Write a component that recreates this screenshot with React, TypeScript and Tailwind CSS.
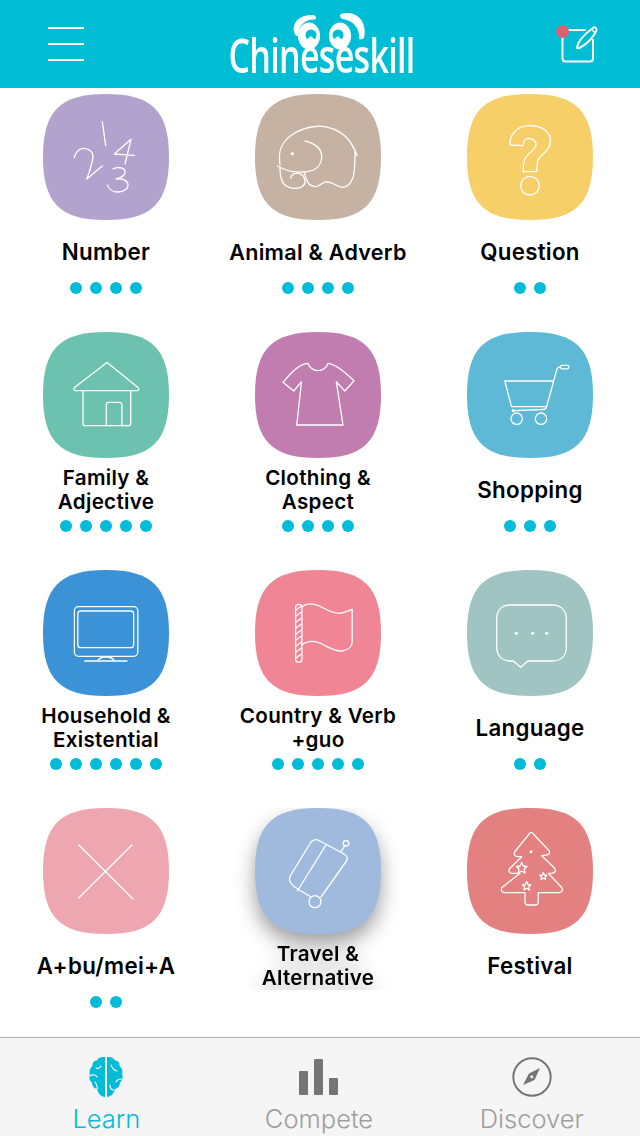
import type { ReactNode } from 'react';

const TILE = 'M63 0C109 0 126 17 126 63C126 109 109 126 63 126C17 126 0 109 0 63C0 17 17 0 63 0Z';

const icons: Record<string, ReactNode> = {
  number: (
    <>
      <path d="M59.3 27.7L62.7 51.7" />
      <path d="M31.3 63.7C33 56 39 53 44 55C50 57 51 62 49 68C48 73 46 80 43.7 85L59.3 72" />
      <path d="M88 45.3L71.3 60L91.3 61.3M88 45.3L82 70" />
      <path d="M70 75C74 73 81 73 82 77C83 81 78 84 73 85C80 84 85 87 85 91C85 96 79 98 74 98C70 98 66 95 64.3 91" />
    </>
  ),
  animal: (
    <>
      <path d="M25 71C24 62 24 56 28 50C33 42 45 34 60 32.5C72 31 85 36 93 45C97 50 100 56 102.3 61.7L100 58C100 68 100 76 98.3 82.7C96 89 93 93 88 93.3C84 93.5 81 91 78 89.5C74 87.5 71 87.5 68 89C65 91 62 93 60 92.7C56 92 53 90 51.7 86C50.5 83 50 80 49 77.7" />
      <path d="M22.3 72C27 74.5 33 77 38.3 77.7C45 78.5 53 78 58.3 76C63 74 66.7 69 66.7 62.7C66.7 56 62 50 50 47" />
      <path d="M25 74.3C25 80 26 85.5 28.3 89.3C31 93 37 95 41.7 94.3C47 93.5 50.5 91 50 87C49.5 83 47.5 80 43.5 79.3C40 78.8 36 80.5 35.7 84.3" />
      <circle cx="37.3" cy="59.7" r="1.6" fill="white" stroke="none" />
    </>
  ),
  question: (
    <>
      <path d="M43 51C42.5 44 46 37 53 33.5C60 30.5 71 31 78 36C84 41 85 48 81.3 54.3C78 59 73 62 71 66C70 69 69.7 74 69.7 77.7H56.3C56 71 56.5 67 59 63C61.5 59.5 66.5 56.5 68.5 53C70.5 49 67 44 61.3 44.3C57.5 44.5 56.3 48 56.3 51.7Z" />
      <circle cx="63" cy="91.7" r="9.3" />
    </>
  ),
  house: (
    <>
      <path d="M63 31.3C63.5 30.5 64.5 30.5 65 31.3L95 55.5C96.5 57 96 58.7 94 58.7H32.5C30.5 58.7 30 57 31.5 55.5Z" />
      <path d="M40 58.7V91.5C40 93 41 93.7 42 93.7H85.7C87 93.7 87.7 93 87.7 91.5V58.7" />
      <path d="M63.3 93.7V73C63.3 71 64.5 70.3 66 70.3H76C78 70.3 78.9 71 78.9 73V93.7" />
    </>
  ),
  shirt: (
    <path d="M52.8 31.3C55 36.5 58.5 38.7 63 38.7C67.5 38.7 71 36.5 73.1 31.3C80 32 90 40 99 48.7L89.8 59L81.3 49.7L88 93H41.7L46.5 49.7L38.7 59L28 50.3C36 41 44 32 52.8 31.3Z" />
  ),
  cart: (
    <>
      <rect x="93.4" y="33.3" width="8.5" height="3.6" rx="1.8" />
      <path d="M93.4 34.9C91 35 90 36 89.7 38L79.5 75C79 77 78 77.5 76 77.5L46.3 78.7" />
      <path d="M37.8 49H86M37.8 49L44.5 74.7H79" />
      <circle cx="49.7" cy="86.7" r="5.7" />
      <circle cx="74" cy="86.7" r="5.7" />
      <circle cx="46.3" cy="78.7" r="1" fill="white" />
    </>
  ),
  tv: (
    <>
      <rect x="31.4" y="36.7" width="63.4" height="49.6" rx="4" />
      <rect x="34.8" y="41" width="55.9" height="36.7" rx="3" />
      <path d="M41.8 91H84M54.4 91C56 88 59 87 63 87C67 87 70 88 71.4 91" />
    </>
  ),
  flag: (
    <>
      <rect x="40.6" y="34.3" width="6.3" height="58" rx="3" />
      {[40, 46, 52, 58, 64, 70, 76, 82, 88].map((y) => (
        <path key={y} d={`M41 ${y}L46.5 ${y - 4}`} strokeWidth="1.2" />
      ))}
      <path d="M46.9 36.7C52 33 57 33 63 35.5C71 39 77 43.5 84 43.3C89 43 93 41 97.2 39.3V72C97.2 76 94 80 87 81C80 81.5 73 77 66 73.5C59 70.5 52 71 46.9 75" />
    </>
  ),
  bubble: (
    <>
      <path d="M44 35H85C94 35 99.3 40 99.3 49V77C99.3 86 94 91 85 91H61L53.7 97.3L46.3 91H44C35 91 29.7 86 29.7 77V49C29.7 40 35 35 44 35Z" />
      <circle cx="49.3" cy="63.3" r="1.6" fill="white" stroke="none" />
      <circle cx="65.6" cy="63.3" r="1.6" fill="white" stroke="none" />
      <circle cx="79.7" cy="63.3" r="1.6" fill="white" stroke="none" />
    </>
  ),
  cross: <path d="M35.9 37L90 91M88.9 37L35.9 89.7" />,
  case: (
    <>
      <path d="M66 89L91.5 53C93 50 92 47.5 89 46L64 32.5C61 31 58 31.5 56 34L35.5 67.5C33 72 36 77 42 80.5L55 88.5" />
      <path d="M71.3 36.3L42.4 83" />
      <circle cx="60" cy="93.7" r="6" />
      <path d="M86.1 43.7L89.8 37.5" />
      <circle cx="91" cy="35.3" r="2.8" />
    </>
  ),
  tree: (
    <>
      <path d="M62.5 25.5C63.5 24 64.8 24 65.8 25.5L82 42.5C83.5 45 82 47 79 47.2L74.7 47.7L87.5 60C89.5 63 88 65 85 65.2L81.3 65.3L94.7 79.5C96.5 82.5 94.5 84.7 91.3 84.7H71.3V94C71.3 96 70 97 68 97H61C59 97 58 96 58 94V84.7H38C35 84.7 33.5 82.5 35 79.5L53 65.3H45C42 65.3 41 62.5 43 60.3L54.7 48.7H50.5C47.5 48.5 46.5 46 48 43.5Z" />
      <path d="M54.7 54.5L56.3 58L60 58.5L57.3 61L58 65L54.7 63L51.3 65L52 61L49.5 58.5L53 58Z" />
      <path d="M76.3 64.5L77.3 67L79.8 67.2L78 69L78.6 71.5L76.3 70.2L74 71.5L74.6 69L72.8 67.2L75.3 67Z" />
      <path d="M59.7 73.5L61 76.5L64 76.8L61.8 78.8L62.4 82L59.7 80.3L57 82L57.6 78.8L55.4 76.8L58.4 76.5Z" />
      <circle cx="64" cy="43.7" r="1.5" fill="white" stroke="none" />
    </>
  ),
};

type Unit = { title: string; fill: string; icon: string; dots: number; dragged?: boolean };

const units: Unit[] = [
  { title: 'Number', fill: '#b2a2ce', icon: 'number', dots: 4 },
  { title: 'Animal & Adverb', fill: '#c6b2a2', icon: 'animal', dots: 4 },
  { title: 'Question', fill: '#f6cf69', icon: 'question', dots: 2 },
  { title: 'Family &\nAdjective', fill: '#6cc2ae', icon: 'house', dots: 5 },
  { title: 'Clothing &\nAspect', fill: '#c17db0', icon: 'shirt', dots: 4 },
  { title: 'Shopping', fill: '#5db9d6', icon: 'cart', dots: 3 },
  { title: 'Household &\nExistential', fill: '#3b92d6', icon: 'tv', dots: 6 },
  { title: 'Country & Verb\n+guo', fill: '#f08595', icon: 'flag', dots: 5 },
  { title: 'Language', fill: '#a0c4c2', icon: 'bubble', dots: 2 },
  { title: 'A+bu/mei+A', fill: '#eea6b0', icon: 'cross', dots: 2 },
  { title: 'Travel &\nAlternative', fill: '#a0bade', icon: 'case', dots: 0, dragged: true },
  { title: 'Festival', fill: '#e38080', icon: 'tree', dots: 0 },
];

function labelSize(title: string) {
  if (title.includes('\n')) return 'text-[20.6px]';
  if (title === 'Animal & Adverb') return 'text-[21.5px]';
  return 'text-[22.3px]';
}

function Tile({ unit }: { unit: Unit }) {
  return (
    <svg width="126" height="126" viewBox="0 0 126 126" fill="none" className="shrink-0">
      <path d={TILE} fill={unit.fill} />
      <g stroke="white" strokeWidth="1.3" strokeLinecap="round" strokeLinejoin="round">
        {icons[unit.icon]}
      </g>
    </svg>
  );
}

function UnitCell({ unit }: { unit: Unit }) {
  const body = (
    <>
      <Tile unit={unit} />
      <div className={`mt-2 flex h-12 items-center justify-center whitespace-pre-line text-center leading-6 font-semibold tracking-[0.3px] text-black ${labelSize(unit.title)}`}>
        {unit.title}
      </div>
    </>
  );

  if (unit.dragged) {
    return (
      <div className="h-[182px] overflow-hidden">
        <div className="flex flex-col items-center [filter:drop-shadow(0_10px_10px_rgba(0,0,0,0.38))]">{body}</div>
      </div>
    );
  }

  return (
    <div className="flex flex-col items-center">
      {body}
      <div className="mt-1.5 flex h-3 gap-2">
        {Array.from({ length: unit.dots }).map((_, i) => (
          <span key={i} className="h-3 w-3 rounded-full bg-[#00bcd8]" />
        ))}
      </div>
    </div>
  );
}

function Logo() {
  return (
    <div className="relative flex h-[88px] w-[190px] items-end justify-center">
      <svg width="80" height="40" viewBox="0 0 80 40" className="absolute left-[64px] top-[11px]">
        <path d="M3 21C1 12 8 3 22 4C25 4.5 26 7 24 8.5C15 8 8 13 7 25C5 25 4 24 3 21Z" fill="white" />
        <path d="M50 3C64 -1 77 9 73 27C72 28 69 29 68 28C69 18 63 10 52 8C49 7 48 4 50 3Z" fill="white" />
        <ellipse cx="18" cy="25" rx="11" ry="13.5" fill="white" />
        <ellipse cx="49" cy="25" rx="11" ry="13.5" fill="white" />
        <circle cx="20" cy="24" r="5.5" fill="#00bdd6" />
        <circle cx="47" cy="24" r="5.5" fill="#00bdd6" />
        <path d="M15 29L20 25L25 30L20 34Z" fill="white" />
        <path d="M42 29L47 25L52 30L47 34Z" fill="white" />
      </svg>
      <span className="mb-[5px] origin-bottom scale-y-[1.4] font-['Open_Sans',sans-serif] text-[34px] leading-[40px] font-semibold tracking-[-0.7px] text-white">
        Chineseskill
      </span>
    </div>
  );
}

function TabIcon({ name }: { name: string }) {
  if (name === 'Learn') {
    const half = 'M16 0C12 -0.5 9 1 8 3.5C5 3.5 3 6 3.5 9C1 11 0 14 1 17C-0.5 20 0.5 24 3 25.5C3 29 5.5 31.5 8 32C9 36 12 40 16 40Z';
    return (
      <svg width="34" height="40" viewBox="0 0 34 40">
        <path d={half} fill="#00bcd8" />
        <path d={half} fill="#00bcd8" transform="translate(34 0) scale(-1 1)" />
        <g fill="none" stroke="#f5f5f5" strokeWidth="1.2" strokeLinecap="round">
          <path d="M7 11C9 12 11 11 12 9M1 19C4 17 7 18 8 20M6 25C8 28 9 30 8 32" />
          <path d="M22 8C23 11 25 13 28 14M33 22C30 22 28 23 27 25M21 28C21 31 22 33 25 33" />
        </g>
      </svg>
    );
  }
  if (name === 'Compete') {
    return (
      <div className="flex h-10 items-end gap-[6px] pb-[2px]">
        <div className="h-6 w-[9px] rounded-[1px] bg-[#757575]" />
        <div className="h-9 w-[9px] rounded-[1px] bg-[#757575]" />
        <div className="h-[17px] w-[9px] rounded-[1px] bg-[#757575]" />
      </div>
    );
  }
  return (
    <svg width="40" height="40" viewBox="0 0 40 40" fill="none">
      <circle cx="20" cy="20" r="18.7" stroke="#757575" strokeWidth="2" />
      <path d="M28 11L22.5 23L11 28L17 16.5Z" fill="#757575" />
      <circle cx="19.8" cy="19.8" r="1.5" fill="#f5f5f5" />
    </svg>
  );
}

export default function App() {
  return (
    <div className="flex h-[1136px] w-[640px] flex-col overflow-hidden bg-white font-['Inter',sans-serif]">
      <header className="flex h-[88px] shrink-0 items-center justify-between bg-[#00bdd6] pl-12 pr-[37px]">
        <div className="flex w-9 flex-col gap-[14px]">
          <div className="h-0.5 bg-white" />
          <div className="h-0.5 bg-white" />
          <div className="h-0.5 bg-white" />
        </div>
        <Logo />
        <div className="relative mt-[1px] h-[44px] w-[44px]">
          <svg width="44" height="44" viewBox="0 0 44 44" fill="none" stroke="white" strokeWidth="2" strokeLinecap="round" strokeLinejoin="round">
            <path d="M26 7H6.5C4.5 7 3.5 8 3.5 10V35C3.5 37.5 4.5 38.5 6.5 38.5H31C33 38.5 34 37.5 34 35V17" />
            <path d="M18 24.5C19 18 27 10 34.5 4.5C36 3.5 38 5.5 37.5 7.5C34 15 27 21.5 20.5 25C19 25.5 18 25.5 18 24.5Z" />
            <path d="M32.5 6.5L36 9.5" strokeWidth="1.5" />
          </svg>
          <div className="absolute left-[-3px] top-[2px] h-[13px] w-[13px] rounded-full bg-[#dd6070]" />
        </div>
      </header>

      <main className="h-[949px] shrink-0 overflow-hidden pt-1.5">
        <div className="grid grid-cols-[212px_212px_212px] auto-rows-[238px]">
          {units.map((unit) => (
            <UnitCell key={unit.title} unit={unit} />
          ))}
        </div>
      </main>

      <nav className="h-[99px] shrink-0 border-t border-[#b2b2b2] bg-[#f5f5f5] pt-[19px]">
        <div className="grid w-[638px] grid-cols-3">
          {['Learn', 'Compete', 'Discover'].map((name) => (
            <div key={name} className="flex flex-col items-center">
              <TabIcon name={name} />
              <span className={`mt-[6px] text-[25.5px] leading-[32px] font-light ${name === 'Learn' ? 'text-[#00bcd8]' : 'text-[#9e9e9e]'}`}>
                {name}
              </span>
            </div>
          ))}
        </div>
      </nav>
    </div>
  );
}
